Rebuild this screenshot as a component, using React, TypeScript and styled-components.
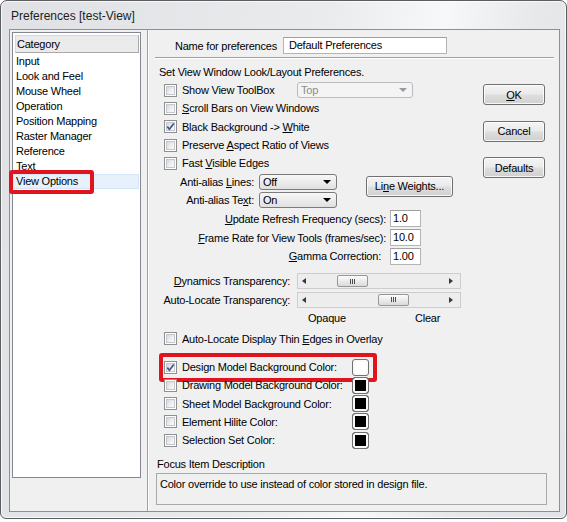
import React from "react";
import styled, { createGlobalStyle, css } from "styled-components";

const GlobalStyle = createGlobalStyle`
  html, body {
    margin: 0;
    padding: 0;
    background: #ffffff;
  }
  body {
    font-family: "Liberation Sans", Arial, sans-serif;
    font-size: 11px;
    letter-spacing: -0.22px;
    color: #000;
  }
  * {
    box-sizing: border-box;
  }
`;

const Window = styled.div`
  width: 567px;
  height: 519px;
  display: flex;
  flex-direction: column;
  padding: 0 6px 6px 8px;
  border: 1px solid #5c5d5f;
  border-radius: 7px 7px 6px 6px;
  background: linear-gradient(
    100deg,
    #dfe1e4 0%,
    #e9ebed 50%,
    #f7f8f9 68%,
    #e6e8ea 82%,
    #e1e3e6 100%
  );
  box-shadow: inset 0 0 0 1px rgba(255, 255, 255, 0.75);
`;

const TitleBar = styled.div`
  height: 28px;
  display: flex;
  align-items: center;
  padding: 2px 0 0 2px;
  font-size: 12px;
  letter-spacing: 0;
  color: #1e1e1e;
`;

const Client = styled.div`
  flex: 1;
  display: flex;
  border: 1px solid #8e8f8f;
  background: #f0f0f0;
`;

const CategoryList = styled.div`
  width: 129px;
  height: 446px;
  flex-shrink: 0;
  margin: 2px 0 0 2px;
  border: 1px solid #828790;
  background: #fff;
`;

const ListHeader = styled.div`
  height: 18px;
  margin: 2px 1px 1px 2px;
  padding-left: 1px;
  line-height: 16px;
  background: #ebebeb;
  border: 1px solid #d8d8d8;
  border-bottom-color: #a9a9a9;
  border-right-color: #a9a9a9;
`;

const ListItem = styled.div<{ $selected?: boolean }>`
  position: relative;
  height: 15px;
  line-height: 15px;
  margin-right: 1px;
  padding-left: 3px;
  white-space: nowrap;
  ${(p) =>
    p.$selected &&
    css`
      background: #e6f1fb;
      box-shadow: inset 0 0 0 1px #d3e5f6;
    `}
`;

const Callout = styled.span<{ $x: number; $y: number; $w: number; $h: number }>`
  position: absolute;
  left: ${(p) => p.$x}px;
  top: ${(p) => p.$y}px;
  width: ${(p) => p.$w}px;
  height: ${(p) => p.$h}px;
  border: 4px solid #e1141d;
  border-radius: 3px;
  pointer-events: none;
`;

const VRule = styled.div`
  width: 2px;
  margin-left: 6px;
  border-left: 1px solid #a0a0a0;
  border-right: 1px solid #ffffff;
`;

const RightPane = styled.div`
  flex: 1;
  min-width: 0;
  display: flex;
  flex-direction: column;
  padding-top: 7px;
`;

const NameRow = styled.div`
  display: flex;
  align-items: center;
  padding-left: 26px;
`;

const NameLabel = styled.span`
  width: 108px;
`;

const TextBox = styled.div<{ $w: number; $pad?: number; $gap?: number }>`
  width: ${(p) => p.$w}px;
  height: 17px;
  margin-left: ${(p) => p.$gap ?? 0}px;
  padding-left: ${(p) => p.$pad ?? 2}px;
  line-height: 15px;
  background: #fff;
  border: 1px solid #b4b4b4;
  border-top-color: #a0a0a0;
  white-space: nowrap;
`;

const HRule = styled.div`
  margin: 3px 5px 0 6px;
  border-top: 1px solid #a0a0a0;
  border-bottom: 1px solid #ffffff;
`;

const Heading = styled.div`
  margin: 6px 0 0 10px;
  line-height: 14px;
`;

const Body = styled.div`
  display: flex;
  margin-top: 2px;
  padding-left: 10px;
`;

const Options = styled.div`
  flex: 1;
  display: flex;
  flex-direction: column;
`;

const ButtonColumn = styled.div`
  width: 62px;
  margin-right: 14px;
  padding-top: 3px;
  display: flex;
  flex-direction: column;
  gap: 15.5px;
`;

const Row = styled.div<{ $h?: number; $top?: number }>`
  position: relative;
  display: flex;
  align-items: center;
  flex-shrink: 0;
  height: ${(p) => p.$h ?? 18.3}px;
  margin-top: ${(p) => p.$top ?? 0}px;
  white-space: nowrap;
`;

const CheckRow = styled(Row)`
  padding-left: 5px;
`;

const Box = styled.span`
  position: relative;
  width: 13px;
  height: 13px;
  flex-shrink: 0;
  margin-right: 5px;
  padding: 1px;
  border: 1px solid #8e8f8f;
  background: #fff;
  display: flex;
`;

const BoxFace = styled.span`
  flex: 1;
  border: 1px solid #c4c7cc;
  background: linear-gradient(135deg, #d6d9dd 0%, #eceef0 55%, #fafafa 100%);
`;

const Tick = styled.svg`
  position: absolute;
  left: 1px;
  top: 1px;
`;

const Label = styled.span<{ $w?: number }>`
  ${(p) => p.$w !== undefined && `width: ${p.$w}px;`}
  flex-shrink: 0;
`;

const FieldLabel = styled.span<{ $w: number; $pad?: number }>`
  width: ${(p) => p.$w}px;
  padding-right: ${(p) => p.$pad ?? 0}px;
  flex-shrink: 0;
  text-align: right;
`;

const Key = styled.span`
  text-decoration: underline;
  text-underline-offset: 1px;
`;

const Combo = styled.div<{ $w: number; $off?: boolean; $gap: number }>`
  width: ${(p) => p.$w}px;
  height: 16px;
  margin-left: ${(p) => p.$gap}px;
  display: flex;
  align-items: center;
  justify-content: space-between;
  padding: 0 5px 0 3px;
  border: 1px solid ${(p) => (p.$off ? "#b9bcc0" : "#7b7b7b")};
  border-radius: 3px;
  background: ${(p) =>
    p.$off ? "#f4f4f4" : "linear-gradient(#f7f7f7 0%, #ececec 50%, #e0e0e0 100%)"};
  color: ${(p) => (p.$off ? "#8c8c8c" : "#000")};
`;

const ComboArrow = styled.span<{ $off?: boolean }>`
  width: 0;
  height: 0;
  border-left: 4px solid transparent;
  border-right: 4px solid transparent;
  border-top: 4px solid ${(p) => (p.$off ? "#9a9a9a" : "#000")};
`;

const PushButton = styled.div<{ $w: number }>`
  width: ${(p) => p.$w}px;
  height: 21px;
  flex-shrink: 0;
  display: flex;
  align-items: center;
  justify-content: center;
  border: 1px solid #707070;
  border-radius: 3px;
  background: linear-gradient(#f4f4f4 0%, #ebebeb 45%, #dddddd 55%, #d0d0d0 100%);
  box-shadow: inset 0 0 0 1px rgba(255, 255, 255, 0.8);
`;

const AliasGroup = styled.div`
  display: flex;
  align-items: flex-start;
`;

const AliasRows = styled.div`
  display: flex;
  flex-direction: column;
`;

const LineWeights = styled(PushButton)`
  margin: 3.5px 0 0 29px;
`;

const Scroll = styled.div`
  width: 164px;
  height: 16px;
  margin-left: 7px;
  display: flex;
  border: 1px solid #cdcdcd;
  background: #ededed;
`;

const ScrollArrow = styled.span<{ $dir: "left" | "right" }>`
  width: 13px;
  display: flex;
  align-items: center;
  justify-content: ${(p) => (p.$dir === "left" ? "flex-start" : "flex-end")};
  padding: ${(p) => (p.$dir === "left" ? "0 0 0 4px" : "0 7px 0 0")};
  &::before {
    content: "";
    border-top: 3.5px solid transparent;
    border-bottom: 3.5px solid transparent;
    ${(p) =>
      p.$dir === "left"
        ? "border-right: 4px solid #3a3a3a;"
        : "border-left: 4px solid #3a3a3a;"}
  }
`;

const ScrollTrack = styled.span`
  flex: 1;
  position: relative;
`;

const Thumb = styled.span`
  position: absolute;
  top: 1px;
  bottom: 1px;
  width: 31px;
  display: flex;
  align-items: center;
  justify-content: center;
  gap: 1px;
  border: 1px solid #979797;
  border-radius: 2px;
  background: linear-gradient(#fbfbfb 0%, #ececec 50%, #dadada 100%);
`;

const Grip = styled.span`
  width: 1px;
  height: 5px;
  background: #4d4d4d;
`;

const ScaleRow = styled(Row)`
  padding-left: 149px;
`;

const ScaleMark = styled.span`
  width: 107px;
`;

const Swatch = styled.span<{ $fill: string }>`
  width: 17px;
  height: 17px;
  flex-shrink: 0;
  border: 1px solid #6f6f6f;
  border-radius: 3px;
  background: ${(p) => p.$fill};
  box-shadow: inset 0 0 0 2px #fafafa;
`;

const FocusLabel = styled.div`
  margin: 8px 0 0 8px;
  line-height: 14px;
`;

const FocusBox = styled.div`
  height: 32px;
  margin: 1.5px 12px 0 7px;
  padding: 3px 0 0 3px;
  line-height: 14px;
  border: 1px solid #a9a9a9;
`;

const categories = [
  "Input",
  "Look and Feel",
  "Mouse Wheel",
  "Operation",
  "Position Mapping",
  "Raster Manager",
  "Reference",
  "Text",
  "View Options",
];

const CheckBox = ({ checked }: { checked?: boolean }) => (
  <Box>
    <BoxFace />
    {checked && (
      <Tick width="9" height="9" viewBox="0 0 9 9">
        <path
          d="M1.3 4.6 L3.4 7.2 L7.8 1.4"
          fill="none"
          stroke="#3d5690"
          strokeWidth="1.7"
        />
      </Tick>
    )}
  </Box>
);

const ScrollBar = ({ value }: { value: number }) => (
  <Scroll>
    <ScrollArrow $dir="left" />
    <ScrollTrack>
      <Thumb style={{ left: `calc((100% - 31px) * ${value})` }}>
        <Grip />
        <Grip />
        <Grip />
      </Thumb>
    </ScrollTrack>
    <ScrollArrow $dir="right" />
  </Scroll>
);

const colorRows = [
  { label: "Drawing Model Background Color:", fill: "#000" },
  { label: "Sheet Model Background Color:", fill: "#000" },
  { label: "Element Hilite Color:", fill: "#000" },
  { label: "Selection Set Color:", fill: "#000" },
];

const App = () => {
  return (
    <>
      <GlobalStyle />
      <Window>
        <TitleBar>Preferences [test-View]</TitleBar>
        <Client>
          <CategoryList>
            <ListHeader>Category</ListHeader>
            {categories.map((c) => (
              <ListItem key={c} $selected={c === "View Options"}>
                {c}
                {c === "View Options" && <Callout $x={-4} $y={-4} $w={85} $h={24} />}
              </ListItem>
            ))}
          </CategoryList>
          <VRule />
          <RightPane>
            <NameRow>
              <NameLabel>Name for preferences</NameLabel>
              <TextBox $w={164} $pad={5}>
                Default Preferences
              </TextBox>
            </NameRow>
            <HRule />
            <Heading>Set View Window Look/Layout Preferences.</Heading>
            <Body>
              <Options>
                <CheckRow>
                  <CheckBox />
                  <Label $w={115}>Show View ToolBox</Label>
                  <Combo $w={116} $gap={0} $off>
                    Top
                    <ComboArrow $off />
                  </Combo>
                </CheckRow>
                <CheckRow>
                  <CheckBox />
                  <Label>
                    <Key>S</Key>croll Bars on View Windows
                  </Label>
                </CheckRow>
                <CheckRow>
                  <CheckBox checked />
                  <Label>
                    Black Background -&gt; <Key>W</Key>hite
                  </Label>
                </CheckRow>
                <CheckRow>
                  <CheckBox />
                  <Label>
                    Preserve <Key>A</Key>spect Ratio of Views
                  </Label>
                </CheckRow>
                <CheckRow>
                  <CheckBox />
                  <Label>
                    Fast <Key>V</Key>isible Edges
                  </Label>
                </CheckRow>

                <AliasGroup>
                  <AliasRows>
                    <Row $h={18.6}>
                      <FieldLabel $w={95}>
                        Anti-alias <Key>L</Key>ines:
                      </FieldLabel>
                      <Combo $w={78} $gap={5}>
                        Off
                        <ComboArrow />
                      </Combo>
                    </Row>
                    <Row $h={18.6}>
                      <FieldLabel $w={95}>
                        Anti-alias Te<Key>x</Key>t:
                      </FieldLabel>
                      <Combo $w={78} $gap={5}>
                        On
                        <ComboArrow />
                      </Combo>
                    </Row>
                  </AliasRows>
                  <LineWeights $w={87}>
                    Li<Key>n</Key>e Weights...
                  </LineWeights>
                </AliasGroup>

                <Row $h={18.6}>
                  <FieldLabel $w={227}>
                    <Key>U</Key>pdate Refresh Frequency (secs):
                  </FieldLabel>
                  <TextBox $w={31} $gap={4}>
                    1.0
                  </TextBox>
                </Row>
                <Row $h={18.6}>
                  <FieldLabel $w={227}>
                    <Key>F</Key>rame Rate for View Tools (frames/sec):
                  </FieldLabel>
                  <TextBox $w={31} $gap={4}>
                    10.0
                  </TextBox>
                </Row>
                <Row $h={18.6}>
                  <FieldLabel $w={227} $pad={5}>
                    <Key>G</Key>amma Correction:
                  </FieldLabel>
                  <TextBox $w={31} $gap={4}>
                    1.00
                  </TextBox>
                </Row>

                <Row $h={18.5} $top={6.5}>
                  <FieldLabel $w={131}>
                    <Key>D</Key>ynamics Transparency:
                  </FieldLabel>
                  <ScrollBar value={0.25} />
                </Row>
                <Row $h={18.5}>
                  <FieldLabel $w={131}>
                    Auto-Locate Transparenc<Key>y</Key>:
                  </FieldLabel>
                  <ScrollBar value={0.635} />
                </Row>
                <ScaleRow $h={18}>
                  <ScaleMark>Opaque</ScaleMark>
                  <span>Clear</span>
                </ScaleRow>

                <CheckRow $top={2.5}>
                  <CheckBox />
                  <Label>
                    Auto-Locate Display Thin <Key>E</Key>dges in Overlay
                  </Label>
                </CheckRow>

                <CheckRow $top={10.2}>
                  <CheckBox checked />
                  <Label $w={170}>Design Model Background Color:</Label>
                  <Swatch $fill="#ffffff" />
                  <Callout $x={0} $y={-5} $w={218} $h={29} />
                </CheckRow>
                {colorRows.map((r) => (
                  <CheckRow key={r.label}>
                    <CheckBox />
                    <Label $w={170}>{r.label}</Label>
                    <Swatch $fill={r.fill} />
                  </CheckRow>
                ))}
              </Options>
              <ButtonColumn>
                <PushButton $w={62}>
                  <Key>O</Key>K
                </PushButton>
                <PushButton $w={62}>Cancel</PushButton>
                <PushButton $w={62}>Defaults</PushButton>
              </ButtonColumn>
            </Body>
            <FocusLabel>Focus Item Description</FocusLabel>
            <FocusBox>Color override to use instead of color stored in design file.</FocusBox>
          </RightPane>
        </Client>
      </Window>
    </>
  );
};

export default App;
